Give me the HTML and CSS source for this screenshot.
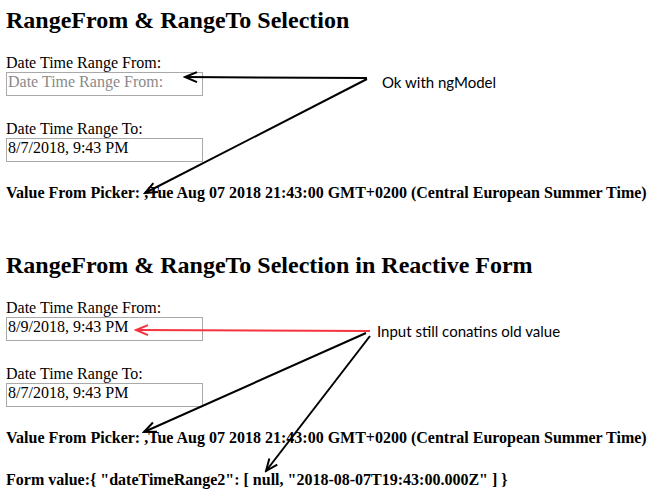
FILE: index.html
```html
<!DOCTYPE html>
<html lang="en">
<head>
    <meta charset="UTF-8">
    <title>RangeFrom &amp; RangeTo Selection</title>
    <link rel="stylesheet" href="styles.css">
</head>
<body>
    <section class="demo">
        <h2>RangeFrom &amp; RangeTo Selection</h2>
        <div class="field">
            <label for="from1">Date Time Range From:</label>
            <input id="from1" type="text" placeholder="Date Time Range From:">
        </div>
        <div class="field">
            <label for="to1">Date Time Range To:</label>
            <input id="to1" type="text" value="8/7/2018, 9:43 PM">
        </div>
        <p class="result">Value From Picker: ,Tue Aug 07 2018 21:43:00 GMT+0200 (Central European Summer Time)</p>
    </section>

    <section class="demo demo-form">
        <h2>RangeFrom &amp; RangeTo Selection in Reactive Form</h2>
        <div class="field">
            <label for="from2">Date Time Range From:</label>
            <input id="from2" type="text" value="8/9/2018, 9:43 PM">
        </div>
        <div class="field">
            <label for="to2">Date Time Range To:</label>
            <input id="to2" type="text" value="8/7/2018, 9:43 PM">
        </div>
        <p class="result">Value From Picker: ,Tue Aug 07 2018 21:43:00 GMT+0200 (Central European Summer Time)</p>
        <p class="result form-value">Form value:{ "dateTimeRange2": [ null, "2018-08-07T19:43:00.000Z" ] }</p>
    </section>

    <!-- annotations drawn over the page -->
    <svg class="arrows" width="655" height="490" viewBox="0 0 655 490">
        <defs>
            <marker id="headBlack" viewBox="-14 -7 16 14" refX="0" refY="0" markerWidth="16" markerHeight="14" markerUnits="userSpaceOnUse" orient="auto">
                <path d="M-12,-5 L0,0 L-12,5" fill="none" stroke="#000" stroke-width="2"/>
            </marker>
            <marker id="headRed" viewBox="-14 -7 16 14" refX="0" refY="0" markerWidth="16" markerHeight="14" markerUnits="userSpaceOnUse" orient="auto">
                <path d="M-12,-5 L0,0 L-12,5" fill="none" stroke="#f5333f" stroke-width="2"/>
            </marker>
        </defs>
        <g fill="none" stroke-width="2">
            <line x1="367" y1="78" x2="185" y2="77" stroke="#000" marker-end="url(#headBlack)"/>
            <line x1="367" y1="79" x2="145" y2="193" stroke="#000" marker-end="url(#headBlack)"/>
            <line x1="370" y1="331" x2="136" y2="330" stroke="#f5333f" marker-end="url(#headRed)"/>
            <line x1="366" y1="333" x2="144" y2="432" stroke="#000" marker-end="url(#headBlack)"/>
            <line x1="370" y1="336" x2="266" y2="471" stroke="#000" marker-end="url(#headBlack)"/>
        </g>
    </svg>
    <span class="note note-ok">Ok with ngModel</span>
    <span class="note note-old">Input still conatins old value</span>
</body>
</html>
```

FILE: styles.css
```css
body {
    margin: 6px;
    font-family: "Liberation Serif", "Times New Roman", serif;
    font-size: 16px;
    color: #000;
    background: #fff;
}
.demo h2 {
    margin: 0;
    font-size: 24px;
    line-height: 28px;
    font-weight: bold;
}
.demo-form {
    margin-top: 49px;
}
.field {
    margin-top: 24px;
}
.demo h2 + .field {
    margin-top: 20px;
}
.field label {
    display: block;
    line-height: 18px;
}
.field input {
    display: block;
    box-sizing: border-box;
    width: 197px;
    height: 24px;
    margin: 0;
    padding: 0 1px 4px;
    border: 1px solid #a9a9a9;
    font-family: "Liberation Serif", "Times New Roman", serif;
    font-size: 16px;
    line-height: 18px;
    color: #000;
    background: #fff;
}
.field input::placeholder {
    color: #8a8a8a;
}
.result {
    margin: 22px 0 0;
    font-weight: bold;
    line-height: 18px;
    white-space: nowrap;
}
.form-value {
    margin-top: 24px;
}
.arrows {
    position: absolute;
    top: 0;
    left: 0;
    pointer-events: none;
}
.note {
    position: absolute;
    font-family: Lato, "Open Sans", sans-serif;
    font-size: 15px;
    line-height: 18px;
    white-space: nowrap;
}
.note-ok {
    left: 382px;
    top: 73px;
}
.note-old {
    left: 377px;
    top: 322px;
}
```
